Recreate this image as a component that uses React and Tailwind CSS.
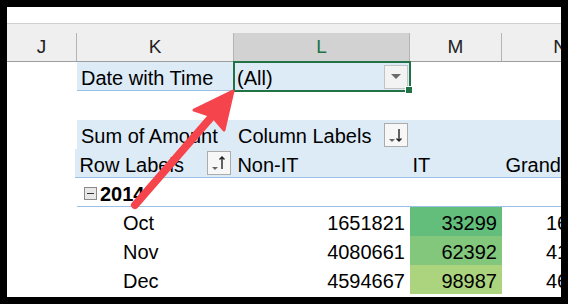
import React from "react";

const font = { fontFamily: '"Liberation Sans", Arial, sans-serif' };

// small sort/filter button used in pivot headers
const SortBtn = ({ up }) => (
  <div className="w-[24px] h-[24px] border border-[#acacac] bg-[#f7f7f7] flex items-center justify-center shrink-0">
    <svg width="20" height="20" viewBox="0 0 20 20">
      <path d="M3 14 h6 l-3 3 z" fill="#666" />
      {up ? (
        <path d="M13 4 v12 M10.5 6.5 L13 4 L15.5 6.5" stroke="#222" strokeWidth="1.4" fill="none" />
      ) : (
        <path d="M13 4 v12 M10.5 13.5 L13 16 L15.5 13.5" stroke="#222" strokeWidth="1.4" fill="none" />
      )}
    </svg>
  </div>
);

const months = [
  { m: "Oct", a: "1651821", b: "33299", c: "16", bg: "bg-[#63be7b]" },
  { m: "Nov", a: "4080661", b: "62392", c: "41", bg: "bg-[#83c77d]" },
  { m: "Dec", a: "4594667", b: "98987", c: "46", bg: "bg-[#acd47f]" },
];

export default function App() {
  return (
    <div className="relative w-[568px] h-[304px] bg-black p-[7px] text-[20px] text-black overflow-hidden" style={font}>
      <div className="w-full h-full bg-white overflow-hidden flex flex-col">
        <div className="h-[16px] shrink-0" />
        <div className="h-px bg-[#d0d0d0] shrink-0" />

        {/* column headers */}
        <div className="h-[38px] shrink-0 bg-[#efefef] border-b border-[#9e9e9e] flex items-end text-[19px] text-[#222]">
          <div className="w-[70px] shrink-0 h-[28px] border-r border-[#b4b4b4] flex items-center justify-center">J</div>
          <div className="w-[157px] shrink-0 h-[28px] border-r border-[#b4b4b4] flex items-center justify-center">K</div>
          <div className="w-[176px] shrink-0 h-[28px] border-r border-[#b4b4b4] bg-[#d2d2d2] flex items-center justify-center text-[#217346]">L</div>
          <div className="w-[92px] shrink-0 h-[28px] border-r border-[#b4b4b4] flex items-center justify-center">M</div>
          <div className="w-[116px] shrink-0 h-[28px] flex items-center justify-center">N</div>
        </div>

        {/* report filter row */}
        <div className="h-[29px] shrink-0 flex">
          <div className="w-[70px]" />
          <div className="w-[157px] bg-[#ddebf7] border-b border-[#9bc2e6] flex items-center pt-[3px] pl-[4px] whitespace-nowrap">Date with Time</div>
          <div className="w-[176px] relative bg-[#ddebf7] flex items-center pt-[3px] pl-[3px]">
            (All)
            <div className="absolute left-[-1px] top-[-1px] right-[-1px] bottom-[-1px] border-2 border-[#217346]" />
            <div className="absolute right-[2px] top-[3px] w-[24px] h-[24px] border border-[#c3c3c3] bg-[#f3f3f3] flex items-center justify-center">
              <svg width="10" height="6" viewBox="0 0 10 6"><path d="M0 0 h10 l-5 5 z" fill="#6b6b6b" /></svg>
            </div>
            <div className="absolute right-[-3px] bottom-[-3px] w-[6px] h-[6px] bg-[#217346] border border-white box-content" />
          </div>
        </div>

        <div className="h-[29px] shrink-0" />

        {/* pivot header */}
        <div className="h-[29px] shrink-0 flex">
          <div className="w-[70px]" />
          <div className="flex-1 bg-[#ddebf7] flex items-center">
            <div className="w-[157px] pl-[4px] pt-[3px] whitespace-nowrap">Sum of Amount</div>
            <div className="w-[176px] flex items-center justify-between pl-[4px] pr-[2px] whitespace-nowrap">
              <span className="pt-[3px]">Column Labels</span> <SortBtn />
            </div>
          </div>
        </div>
        <div className="h-[29px] shrink-0 flex">
          <div className="w-[70px]" />
          <div className="flex-1 bg-[#ddebf7] border-b border-[#9bc2e6] flex items-center whitespace-nowrap">
            <div className="w-[157px] pl-[4px] flex items-center justify-between pr-[1px]">
              <span className="pt-[3px]">Row Labels</span> <SortBtn up />
            </div>
            <div className="w-[176px] pl-[5px] pt-[3px]">Non-IT</div>
            <div className="w-[92px] pl-[4px] pt-[3px]">IT</div>
            <div className="flex-1 pl-[5px] pt-[3px]">Grand</div>
          </div>
        </div>

        {/* year row */}
        <div className="h-[29px] shrink-0 flex">
          <div className="w-[70px]" />
          <div className="flex-1 border-b border-[#9bc2e6] flex items-center pl-[7px] gap-[3px]">
            <div className="w-[13px] h-[13px] mt-[3px] border border-[#8a8a8a] bg-[#e8e8e8] flex items-center justify-center">
              <div className="w-[7px] h-px bg-[#333]" />
            </div>
            <span className="font-bold pt-[3px]">2014</span>
          </div>
        </div>

        {months.map((r) => (
          <div key={r.m} className="h-[29px] shrink-0 flex">
            <div className="w-[70px]" />
            <div className="w-[157px] flex items-center pt-[3px] pl-[46px]">{r.m}</div>
            <div className="w-[176px] flex items-center justify-end pt-[3px] pr-[5px]">{r.a}</div>
            <div className={`w-[92px] flex items-center justify-end pt-[3px] pr-[5px] ${r.bg}`}>{r.b}</div>
            <div className="flex-1 flex items-center pt-[3px] pl-[44px] overflow-hidden whitespace-nowrap">{r.c}</div>
          </div>
        ))}
      </div>

      {/* red arrow callout */}
      <svg className="absolute left-0 top-0 pointer-events-none" width="568" height="304" viewBox="0 0 568 304">
        <line x1="135" y1="205" x2="214" y2="114" stroke="#f5444b" strokeWidth="8" strokeLinecap="round" />
        <path d="M233 91 L194 110 L212 116 L224 130 Z" fill="#f5444b" stroke="#f5444b" strokeWidth="3" strokeLinejoin="round" />
      </svg>
    </div>
  );
}
